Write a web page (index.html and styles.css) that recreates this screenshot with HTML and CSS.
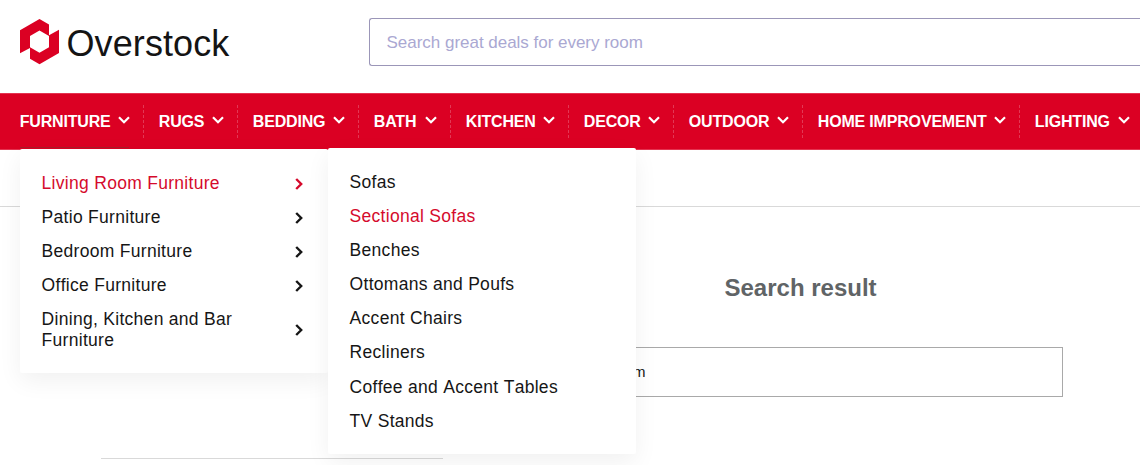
FILE: index.html
```
<!DOCTYPE html>
<html lang="en">
<head>
<meta charset="utf-8">
<title>Overstock</title>
<link rel="stylesheet" href="styles.css">
</head>
<body>
<svg class="defs" aria-hidden="true">
  <symbol id="down" viewBox="0 0 12 8"><path d="M1 1.2 6 6.2 11 1.2" fill="none" stroke="currentColor" stroke-width="2.2"/></symbol>
  <symbol id="right" viewBox="0 0 8 12"><path d="M1.2 1 6.2 6 1.2 11" fill="none" stroke="currentColor" stroke-width="2.4"/></symbol>
</svg>
<header class="header">
  <a class="logo">
    <svg class="logo-mark" viewBox="0 0 40 46"><path fill="#db0023" d="M0 11.3 19.5 0 29 5.5V16.3L39 10.8V34L19.5 45.3 10 39.8V29L0 34.2ZM19.5 11.4 10 17V28.2L19.5 33.8 29 28.2V17Z" fill-rule="evenodd"/></svg>
    <span class="logo-text">Overstock</span>
  </a>
  <div class="search">Search great deals for every room</div>
</header>
<nav class="nav">
  <a class="nav-item"><span>FURNITURE</span><svg class="down"><use href="#down"/></svg></a>
  <a class="nav-item"><span>RUGS</span><svg class="down"><use href="#down"/></svg></a>
  <a class="nav-item"><span>BEDDING</span><svg class="down"><use href="#down"/></svg></a>
  <a class="nav-item"><span>BATH</span><svg class="down"><use href="#down"/></svg></a>
  <a class="nav-item"><span>KITCHEN</span><svg class="down"><use href="#down"/></svg></a>
  <a class="nav-item"><span>DECOR</span><svg class="down"><use href="#down"/></svg></a>
  <a class="nav-item"><span>OUTDOOR</span><svg class="down"><use href="#down"/></svg></a>
  <a class="nav-item"><span>HOME IMPROVEMENT</span><svg class="down"><use href="#down"/></svg></a>
  <a class="nav-item"><span>LIGHTING</span><svg class="down"><use href="#down"/></svg></a>
</nav>
<div class="menu menu-main">
  <a class="menu-item active"><span>Living Room Furniture</span><svg class="right"><use href="#right"/></svg></a>
  <a class="menu-item"><span>Patio Furniture</span><svg class="right"><use href="#right"/></svg></a>
  <a class="menu-item"><span>Bedroom Furniture</span><svg class="right"><use href="#right"/></svg></a>
  <a class="menu-item"><span>Office Furniture</span><svg class="right"><use href="#right"/></svg></a>
  <a class="menu-item"><span>Dining, Kitchen and Bar Furniture</span><svg class="right"><use href="#right"/></svg></a>
</div>
<div class="menu menu-sub">
  <a class="menu-item">Sofas</a>
  <a class="menu-item active">Sectional Sofas</a>
  <a class="menu-item">Benches</a>
  <a class="menu-item">Ottomans and Poufs</a>
  <a class="menu-item">Accent Chairs</a>
  <a class="menu-item">Recliners</a>
  <a class="menu-item">Coffee and Accent Tables</a>
  <a class="menu-item">TV Stands</a>
</div>
<div class="strip"></div>
<main class="main">
  <h1 class="title">Search result</h1>
  <div class="field">m</div>
  <hr class="rule">
</main>
</body>
</html>
```
FILE: styles.css
```
* { box-sizing: border-box; }
body {
  margin: 0;
  height: 465px;
  overflow: hidden;
  position: relative;
  background: #fff;
  color: #161616;
  font-family: "Liberation Sans", Arial, sans-serif;
}
.defs { display: none; }
.header {
  height: 93px;
  display: flex;
  padding: 18px 0 0 20px;
}
.logo { flex: none; display: flex; width: 349px; padding-top: 1px; }
.logo-mark { width: 40px; height: 46px; }
.logo-text {
  margin-left: 6.5px;
  font-size: 36px;
  line-height: 50px;
  letter-spacing: 0.1px;
  color: #141414;
}
.search {
  flex: 1;
  height: 48px;
  padding-left: 16.5px;
  border: 1px solid #9b96b8;
  border-right: 0;
  border-radius: 3px 0 0 3px;
  font-size: 17px;
  line-height: 47px;
  letter-spacing: -0.02px;
  color: #aaa8d2;
}
.nav {
  height: 57px;
  display: grid;
  grid-template-columns: 144px 94px 121px 92px 118px 105px 129px 217px 126px;
  align-items: center;
  background: #db0023;
  border: solid #e43350;
  border-width: 1px 0;
  color: #fff;
}
.nav-item {
  height: 33px;
  display: flex;
  align-items: center;
  justify-content: space-between;
  padding: 0 13.5px 0 14.8px;
  font-size: 16px;
  font-weight: bold;
  letter-spacing: -0.18px;
  white-space: nowrap;
  border-right: 1px dashed #e23855;
}
.nav-item:first-child { padding-left: 19.7px; }
.nav-item:last-child { border-right: 0; padding-right: 16.5px; }
.down { flex: none; width: 12px; height: 8px; margin-top: -4px; }
.menu {
  position: absolute;
  display: flex;
  flex-direction: column;
  gap: 13.1px;
  width: 308px;
  padding: 23.5px 22px 0 21.6px;
  background: #fff;
  border-radius: 2px;
  box-shadow: 0 8px 24px rgba(0, 0, 0, 0.06);
  font-size: 17.5px;
  font-kerning: none;
  line-height: 21px;
  letter-spacing: 0.29px;
}
.menu-main { left: 20px; top: 149px; height: 224px; }
.menu-main::before {
  content: "";
  position: absolute;
  left: 0;
  top: -2px;
  width: 109px;
  height: 1px;
  background: #a61c27;
}
.menu-sub { left: 328px; top: 148px; height: 306px; gap: 13.19px; }
.menu-item { display: flex; align-items: center; justify-content: space-between; }
.menu-item span { width: 215px; }
.active { color: #d50a2c; }
.right { flex: none; width: 8px; height: 12px; margin: 1px 3px 0 0; }
.strip { height: 57px; border-bottom: 1px solid #d9d9d9; }
.main { padding: 67px 77px 0 101px; }
.title {
  margin: 0 0 0 623.5px;
  font-size: 24px;
  line-height: 28px;
  color: #606466;
}
.field {
  height: 50px;
  margin: 45px 0 61px 500px;
  padding-left: 31px;
  border: 1px solid #a9a9a9;
  font-size: 15px;
  line-height: 48px;
}
.rule { width: 342px; height: 1px; margin: 0; border: 0; background: #d9d9d9; }
```
